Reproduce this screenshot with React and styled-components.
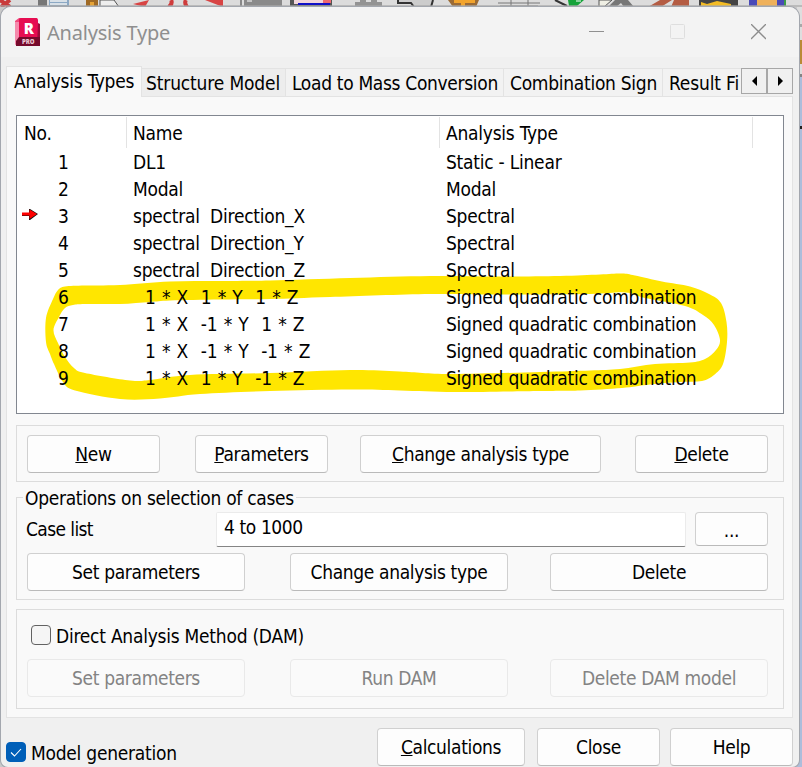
import React from "react";
import styled, { createGlobalStyle, css } from "styled-components";

const Global = createGlobalStyle`
  *, *::before, *::after { box-sizing: border-box; }
  html, body { margin: 0; padding: 0; overflow: hidden; }
  body { font: 19px/24px "DejaVu Sans Condensed", "DejaVu Sans", sans-serif; letter-spacing: -0.24px; color: #000; }
  button, input, fieldset { font: inherit; letter-spacing: inherit; color: inherit; margin: 0; }
`;

const Desktop = styled.div`
  display: flex;
  flex-direction: column;
  width: 802px;
  height: 767px;
  overflow: hidden;
  background:
    linear-gradient(#222 0 3px) right 126px / 3px 3px no-repeat,
    linear-gradient(#dedede 0 24px, #a9a9a9 24px 27px, #dedede 27px 40px, #b98a35 40px 64px, #dedede 64px 74px, #858585 74px 77px, #adbddb 77px) right / 5px 100% no-repeat,
    #c9c9c9;
`;

const ToolbarSliver = styled.svg`
  display: block;
  flex: none;
  width: 802px;
  height: 7px;
`;

const Dialog = styled.main`
  display: flex;
  flex-direction: column;
  width: 798px;
  height: 760px;
  margin-left: 1px;
  background: #f0f0f0;
  border-radius: 10px 10px 7px 7px;
  box-shadow: 0 0 0 1px #a3a7ae;
  overflow: hidden;
`;

const TitleBar = styled.header`
  display: flex;
  align-items: center;
  flex: none;
  height: 50px;
  padding-left: 13px;
  background: #f3f3f3;
`;

const Title = styled.h1`
  flex: 1;
  margin: 2px 0 0 6px;
  font: 400 20px/24px "Noto Sans", "Open Sans", sans-serif;
  letter-spacing: -0.2px;
  color: #8f8f8f;
`;

const WindowButtons = styled.div`
  display: flex;
  gap: 66px;
  margin-right: 33px;
`;

const TabBar = styled.nav`
  display: flex;
  align-items: flex-end;
  flex: none;
  height: 39px;
  margin: 0 5px;
  position: relative;
  z-index: 1;
`;

const Tab = styled.div`
  flex: none;
  width: ${(p) => p.$width}px;
  height: 28px;
  padding: 2px 0 0 ${(p) => p.$pad ?? 6}px;
  white-space: nowrap;
  overflow: hidden;
  letter-spacing: ${(p) => p.$track ?? -0.28}px;
  background: #f2f2f2;
  border: solid #e3e3e3;
  border-width: 1px 1px 0 0;
  ${(p) =>
    p.$first &&
    css`
      background: #ededed;
    `}
  ${(p) =>
    p.$last &&
    css`
      border-right: 0;
    `}
  ${(p) =>
    p.$active &&
    css`
      height: 31px;
      margin-bottom: -1px;
      background: #f9f9f9;
      border-left-width: 1px;
    `}
`;

const TabArrow = styled.button`
  display: flex;
  align-items: center;
  justify-content: center;
  flex: none;
  width: 26px;
  height: 26px;
  margin-bottom: 2px;
  padding: 0;
  background: #f0f0f0;
  border: 1px solid #a7a7a7;
`;

const Page = styled.section`
  display: flex;
  flex-direction: column;
  flex: none;
  width: 787px;
  height: 622px;
  margin-left: 5px;
  padding: 18px 8px 0 9px;
  background: #f9f9f9;
  border: 1px solid #e3e3e3;
`;

const CaseTable = styled.div`
  position: relative;
  flex: none;
  height: 299px;
  background: #fff;
  border: 1px solid #828790;
`;

const Highlight = styled.svg`
  position: absolute;
  left: -17px;
  top: -116px;
  width: 802px;
  height: 420px;
  pointer-events: none;
`;

const columns = css`
  display: grid;
  grid-template-columns: 110px 313px 313px 1fr;
`;

const HeadRow = styled.div`
  ${columns}
  height: 33px;
`;

const HeadCell = styled.div`
  height: 31px;
  margin-top: 1px;
  padding: 4px 0 0 ${(p) => p.$pad ?? 6}px;
  border-right: ${(p) => (p.$open ? 0 : 1)}px solid #e3e3e3;
`;

const CaseRow = styled.div`
  ${columns}
  position: relative;
  height: 27px;
  line-height: 27px;
  white-space: pre;
`;

const NumberCell = styled.div`
  display: flex;
  align-items: center;
  padding-left: 5px;
`;

const ArrowSlot = styled.span`
  display: flex;
  width: 36px;
  padding-bottom: 4px;
`;

const NameCell = styled.div`
  padding-left: ${(p) => (p.$formula ? 18 : 6)}px;
  word-spacing: ${(p) => (p.$formula ? 1.15 : 0)}px;
`;

const TypeCell = styled.div`
  padding-left: 6px;
`;

const Group = styled.section`
  position: relative;
  flex: none;
  height: ${(p) => p.$height}px;
  margin-top: ${(p) => p.$top}px;
  padding: ${(p) => p.$inset}px 0 0 10px;
  border: 1px solid #dcdcdc;
`;

const Legend = styled.div`
  position: absolute;
  left: 6px;
  top: -12px;
  padding: 0 2px;
  background: #f9f9f9;
  letter-spacing: -0.3px;
`;

const ButtonRow = styled.div`
  display: grid;
  grid-template-columns: ${(p) => p.$columns};
`;

const Button = styled.button`
  width: ${(p) => p.$width}px;
  height: ${(p) => p.$height ?? 38}px;
  padding: ${(p) => p.$drop ?? 0}px 0 0;
  line-height: 24px;
  letter-spacing: -0.34px;
  white-space: nowrap;
  background: #fdfdfd;
  border: 1px solid #d0d0d0;
  border-bottom-color: #bababa;
  border-radius: 4px;
  &:disabled {
    color: #838383;
    background: #fafafa;
    border-color: #e9e9e9;
  }
`;

const Mnemonic = styled.span`
  text-decoration: underline;
  text-decoration-thickness: 1px;
  text-underline-offset: 1px;
  text-decoration-skip-ink: none;
`;

const CaseListRow = styled.div`
  display: flex;
  align-items: flex-start;
  height: 41px;
`;

const FieldLabel = styled.label`
  width: 190px;
  margin: 5px 0 0 -1px;
  letter-spacing: -0.6px;
`;

const CaseInput = styled.input`
  width: 470px;
  height: 35px;
  margin-right: 9px;
  padding: 0 7px 5px;
  letter-spacing: -0.4px;
  background: #fff;
  border: 1px solid #ebebeb;
  border-bottom-color: #858585;
  border-radius: 2px;
  outline: 0;
`;

const CheckRow = styled.label`
  display: flex;
  align-items: flex-start;
  gap: 5px;
  height: 34px;
  padding-left: 4px;
`;

const CheckBox = styled.span`
  display: flex;
  align-items: center;
  justify-content: center;
  flex: none;
  width: 20px;
  height: 20px;
  background: ${(p) => (p.$checked ? "#005fb8" : "#f5f5f5")};
  border: 1px solid ${(p) => (p.$checked ? "#005fb8" : "#626262")};
  border-radius: 4px;
`;

const CheckText = styled.span`
  margin-top: -1px;
`;

const Footer = styled.footer`
  display: flex;
  align-items: flex-start;
  margin-top: 10px;
  padding-left: 5px;
`;

const ModelCheck = styled.label`
  display: flex;
  gap: 5px;
  width: 371px;
  margin-top: 14px;
`;

const FooterButtons = styled.div`
  display: grid;
  grid-template-columns: 160px 133px 123px;
`;

const smoothPath = (pts) => {
  const n = pts.length;
  const at = (i) => pts[(i + n) % n];
  let d = `M${at(0)}`;
  for (let i = 0; i < n; i++) {
    const [a, b, c, e] = [at(i - 1), at(i), at(i + 1), at(i + 2)];
    d += `C${b[0] + (c[0] - a[0]) / 6},${b[1] + (c[1] - a[1]) / 6} ${c[0] - (e[0] - b[0]) / 6},${c[1] - (e[1] - b[1]) / 6} ${c}`;
  }
  return d + "Z";
};

const outerLoop = [[65,286.5],[85,285.5],[120,285],[170,281.5],[220,281],[270,280.5],[350,278],[430,276],[500,276.5],[560,276],[600,274.5],[622,273.5],[635,275.5],[662,281.5],[690,286.5],[709,294],[721,303],[726.5,322],[727,342],[723,364],[714,375],[702,381],[680,382],[650,384.5],[622,388],[580,390.5],[540,391],[455,392],[400,390.5],[350,389.5],[270,391],[200,394],[160,398.5],[120,399],[75,390.5],[63,382],[54,364],[50,354],[46,342],[46,318],[53,299],[58,290]];
const innerLoop = [[73,305],[85,304],[120,304],[150,302],[170,300.5],[220,299.5],[270,299],[330,297],[430,294],[500,294.5],[590,294],[625,292.5],[645,298],[685,306],[703,315],[714,325],[720,340],[716,350],[705,359],[690,362.5],[655,364],[620,369],[590,370.5],[540,372],[450,374],[400,371.5],[350,370],[270,373],[190,375],[150,380],[130,380.5],[85,373],[74,368],[65,357],[58,343],[53.5,330],[59,317],[65,308]];

const cases = [
  ["1", "DL1", "Static - Linear"],
  ["2", "Modal", "Modal"],
  ["3", "spectral  Direction_X", "Spectral"],
  ["4", "spectral  Direction_Y", "Spectral"],
  ["5", "spectral  Direction_Z", "Spectral"],
  ["6", "1 * X  1 * Y  1 * Z", "Signed quadratic combination"],
  ["7", "1 * X  -1 * Y  1 * Z", "Signed quadratic combination"],
  ["8", "1 * X  -1 * Y  -1 * Z", "Signed quadratic combination"],
  ["9", "1 * X  1 * Y  -1 * Z", "Signed quadratic combination"],
];

const AppIcon = () => (
  <svg width="27" height="29" viewBox="0 0 27 29">
    <path d="M1 3 5 0h18v21H5l-4 6z" fill="#f0477c" />
    <path d="M1 4h4v20l-4 3z" fill="#f58aac" />
    <path d="M5 2q0-2 2-2h15q2 0 2 2v18H5z" fill="#e60d51" />
    <path d="M24 5l2 1v22h-3z" fill="#9c0d3b" />
    <path d="M5 19h21v9H2v-5z" fill="#760a2c" />
    <text x="14.8" y="15.500" textAnchor="middle" fontFamily="Open Sans" fontWeight="800" fontSize="15" letterSpacing="0" fill="#fff">R</text>
    <text x="14.3" y="26" textAnchor="middle" fontFamily="Open Sans" fontWeight="800" fontSize="6" letterSpacing="0" fill="#e9c6d2">PRO</text>
  </svg>
);

const ToolbarIcons = () => (
  <ToolbarSliver viewBox="0 0 802 7">
    <rect width="802" height="7" fill="#dcdcdc" />
    <path d="M0 0 10 7M10 0 1 7" stroke="#c93a3a" strokeWidth="4" />
    <path d="M38 0h9v7h-9z" fill="#777" /><path d="M49 0h20v7H49z" fill="#8ba8c4" /><path d="M50 1h17M50 4h17" stroke="#f2f2f2" strokeWidth="1.5" />
    <path d="M86 0h12v7H86z" fill="#a06a25" /><path d="M90 2h4v4h-4z" fill="#e6a335" /><path d="M100 0h14l5 7h-19z" fill="#eee" stroke="#555" />
    <path d="M133 4 149 0l-4 7zM205 0l18 0 0 7z" fill="#d84444" />
    <path d="M171 0q2 3-2 7M186 0q-2 3 1 7" fill="none" stroke="#cf3c3c" strokeWidth="4" />
    <path d="M240 0h2v7h-2z" fill="#888" /><path d="M244 0h38v7h-38z" fill="#8a8a8a" /><path d="M247 1h5" stroke="#fff" />
    <path d="M290 0h42v7h-42z" fill="#555" /><path d="M294 0h35v4h-35z" fill="#f1d5dc" /><path d="M298 4h32" stroke="#1010c8" strokeWidth="2" /><path d="M323 0h8v3h-8z" fill="#ef6870" />
    <path d="M355 2h5V0h6v2h5V0h6v2h5v5h-27z" fill="#939393" />
    <path d="M398 0v3h13l3 4h17l2-7" fill="#ccc" stroke="#333" strokeWidth="2" />
    <path d="M448 0h31l-3 7h-23z" fill="#9b6b36" /><path d="M454 0v3h7v4h4V3h10V0z" fill="#f2a42d" />
    <path d="M498 3h42M511 0v7M528 0v7M500 6h38" stroke="#777" />
    <path d="M555 0 567 6" stroke="#333" strokeWidth="2" /><path d="M568 0h16l-7 6h-8z" fill="#16a33a" /><path d="M576 1h5" stroke="#fff" />
    <path d="M599 0h13l-8 7h-5z" fill="#efefe4" stroke="#555" /><path d="M608 7 615 0h13l6 7h-10l-3-4-5 4z" fill="#777" />
    <path d="M648 7 660 0h12l-11 7zM674 0h15v7h-18z" fill="#b45c43" />
    <path d="M699 0h39v7h-39z" fill="#444" /><path d="M701 2l6 2 10-3 14 3v3h-30z" fill="#f4bc24" />
    <path d="M749 0h37v7h-37z" fill="#4a4ab8" /><path d="M757 0h20v6h-20z" fill="#efb15b" /><path d="M785 0v7" stroke="#3d9c48" strokeWidth="2" />
    <rect y="5" width="802" height="2" fill="#a9a9a9" opacity=".65" />
  </ToolbarSliver>
);

export default function App() {
  return (
    <Desktop>
      <Global />
      <ToolbarIcons />
      <Dialog>
        <TitleBar>
          <AppIcon />
          <Title>Analysis Type</Title>
          <WindowButtons>
            <svg width="15" height="16"><path d="M0 7.500h15" stroke="#909090" /></svg>
            <svg width="15" height="16"><rect x=".5" y=".5" width="14" height="14" rx="1" fill="none" stroke="#dedede" /></svg>
            <svg width="15" height="16"><path d="M0 0 15 15M15 0 0 15" stroke="#8c8c8c" strokeWidth="1.3" /></svg>
          </WindowButtons>
        </TitleBar>
        <TabBar>
          <Tab $active $width={136} $pad={7} $track={-0.26}>Analysis Types</Tab>
          <Tab $first $width={144} $pad={4} $track={-0.15}>Structure Model</Tab>
          <Tab $width={218} $track={-0.32}>Load to Mass Conversion</Tab>
          <Tab $width={159}>Combination Sign</Tab>
          <Tab $last $width={78} $track={-0.15}>Result Fi</Tab>
          <TabArrow aria-label="Previous tabs"><svg width="7" height="10"><path d="M6 0v10L1 5z" /></svg></TabArrow>
          <TabArrow aria-label="Next tabs"><svg width="7" height="10"><path d="M1 0v10l5-5z" /></svg></TabArrow>
        </TabBar>
        <Page>
          <CaseTable>
            <Highlight viewBox="0 0 802 420">
              <path d={smoothPath(outerLoop) + smoothPath(innerLoop)} fill="#ffe600" fillRule="evenodd" />
            </Highlight>
            <HeadRow>
              <HeadCell $pad={7}>No.</HeadCell>
              <HeadCell>Name</HeadCell>
              <HeadCell>Analysis Type</HeadCell>
              <HeadCell $open />
            </HeadRow>
            {cases.map(([no, name, type]) => (
              <CaseRow key={no}>
                <NumberCell>
                  <ArrowSlot>
                    {no === "3" && (
                      <svg width="17" height="11"><path d="M0 4h7V0h1l8 5-8 6H7V7H0z" fill="#111" /><path d="M0 3.500h7.500V.5L15 5 7.500 10V6.500H0z" fill="#f00" /></svg>
                    )}
                  </ArrowSlot>
                  {no}
                </NumberCell>
                <NameCell $formula={name.startsWith("1")}>{name}</NameCell>
                <TypeCell>{type}</TypeCell>
              </CaseRow>
            ))}
          </CaseTable>
          <Group $top={11} $height={57} $inset={9}>
            <ButtonRow $columns="168px 165px 275px 133px">
              <Button $width={133}><Mnemonic>N</Mnemonic>ew</Button>
              <Button $width={133}><Mnemonic>P</Mnemonic>arameters</Button>
              <Button $width={241}><Mnemonic>C</Mnemonic>hange analysis type</Button>
              <Button $width={133}><Mnemonic>D</Mnemonic>elete</Button>
            </ButtonRow>
          </Group>
          <Group $top={15} $height={103} $inset={14}>
            <Legend>Operations on selection of cases</Legend>
            <CaseListRow>
              <FieldLabel htmlFor="caseList">Case list</FieldLabel>
              <CaseInput id="caseList" defaultValue="4 to 1000" />
              <Button $width={73} $height={34} $drop={1}>...</Button>
            </CaseListRow>
            <ButtonRow $columns="263px 260px 218px">
              <Button $width={218}>Set parameters</Button>
              <Button $width={218}>Change analysis type</Button>
              <Button $width={218}>Delete</Button>
            </ButtonRow>
          </Group>
          <Group $top={9} $height={100} $inset={15}>
            <CheckRow>
              <CheckBox />
              <CheckText>Direct Analysis Method (DAM)</CheckText>
            </CheckRow>
            <ButtonRow $columns="263px 260px 218px">
              <Button disabled $width={218}>Set parameters</Button>
              <Button disabled $width={218}>Run DAM</Button>
              <Button disabled $width={218}>Delete DAM model</Button>
            </ButtonRow>
          </Group>
        </Page>
        <Footer>
          <ModelCheck>
            <CheckBox $checked>
              <svg width="12" height="9"><path d="M1 4.500 4.500 8 11 1" fill="none" stroke="#fff" strokeWidth="1.1" /></svg>
            </CheckBox>
            <CheckText>Model generation</CheckText>
          </ModelCheck>
          <FooterButtons>
            <Button $width={148}><Mnemonic>C</Mnemonic>alculations</Button>
            <Button $width={123}>Close</Button>
            <Button $width={123}>Help</Button>
          </FooterButtons>
        </Footer>
      </Dialog>
    </Desktop>
  );
}
